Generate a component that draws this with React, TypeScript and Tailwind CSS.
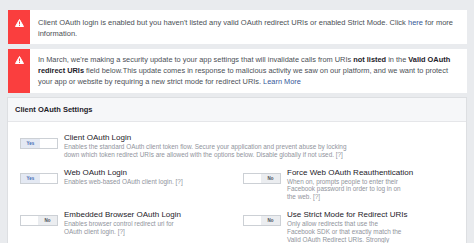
import React from "react";

function Warn() {
  return (
    <svg width="9" height="8" viewBox="0 0 18 16">
      <path d="M9 1 L17 15 H1 Z" fill="#fff" stroke="#fff" strokeWidth="2" strokeLinejoin="round" />
      <rect x="8" y="5" width="2" height="5.5" fill="#fa3e3e" />
      <rect x="8" y="11.8" width="2" height="2" fill="#fa3e3e" />
    </svg>
  );
}

function Toggle({ on }: { on: boolean }) {
  return (
    <div className="flex h-[11px] w-[38px] shrink-0 border border-[#ccd0d5] bg-white text-[4.5px] font-bold leading-[9px]">
      {on ? (
        <>
          <div className="flex w-[19px] items-center justify-center bg-[#e4e9f3] text-[#4267b2]">Yes</div>
          <div className="flex-1 bg-white" />
        </>
      ) : (
        <>
          <div className="flex-1 bg-white" />
          <div className="flex w-[19px] items-center justify-center bg-[#ebedf0] text-[#4b4f56]">No</div>
        </>
      )}
    </div>
  );
}

function Item({ on, title, desc, descW }: { on: boolean; title: string; desc: string; descW: string }) {
  return (
    <div className="flex gap-[6px]">
      <div className="pt-[5px]">
        <Toggle on={on} />
      </div>
      <div>
        <div className="text-[8px] leading-[10px] text-[#1d2129]">{title}</div>
        <div className={`${descW} text-[6.4px] leading-[7.8px] text-[#90949c]`}>{desc}</div>
      </div>
    </div>
  );
}

export default function App() {
  return (
    <div className="h-[243px] overflow-hidden bg-[#e9ebee] pl-[7px] pr-[7px] pt-[10px] font-['Liberation_Sans',Arial,sans-serif]">
      <div className="ml-[1px] flex h-[34px] bg-white">
        <div className="flex w-[22px] shrink-0 justify-center bg-[#fa3e3e] pt-[9px]">
          <Warn />
        </div>
        <div className="pl-[8px] pr-[4px] pt-[7px] text-[7.5px] leading-[11px] text-[#4b4f56]">
          Client OAuth login is enabled but you haven't listed any valid OAuth redirect URIs or enabled Strict Mode. Click{" "}
          <span className="text-[#365899]">here</span> for more information.
        </div>
      </div>
      <div className="ml-[1px] mt-[5px] flex h-[44px] bg-white">
        <div className="flex w-[22px] shrink-0 justify-center bg-[#fa3e3e] pt-[7px]">
          <Warn />
        </div>
        <div className="pl-[8px] pr-[4px] pt-[5px] text-[7.4px] leading-[11px] text-[#4b4f56]">
          In March, we're making a security update to your app settings that will invalidate calls from URIs{" "}
          <b className="text-[#1d2129]">not listed</b> in the <b className="text-[#1d2129]">Valid OAuth redirect URIs</b> field
          below.This update comes in response to malicious activity we saw on our platform, and we want to protect your app or
          website by requiring a new strict mode for redirect URIs. <span className="text-[#365899]">Learn More</span>
        </div>
      </div>
      <div className="mt-[4px] border border-[#dddfe2] bg-white">
        <div className="flex h-[24px] items-center border-b border-[#e5e6e9] bg-[#f6f7f9] pl-[7px] text-[7.5px] font-bold text-[#1d2129]">
          Client OAuth Settings
        </div>
        <div className="flex flex-col gap-[9px] pl-[12px] pt-[11px]">
          <Item
            on
            title="Client OAuth Login"
            descW="w-[298px]"
            desc="Enables the standard OAuth client token flow. Secure your application and prevent abuse by locking down which token redirect URIs are allowed with the options below. Disable globally if not used.  [?]"
          />
          <div className="grid grid-cols-[223px_1fr] gap-y-[9px]">
            <Item on title="Web OAuth Login" descW="w-[124px]" desc="Enables web-based OAuth client login.  [?]" />
            <Item
              on={false}
              title="Force Web OAuth Reauthentication"
              descW="w-[118px]"
              desc="When on, prompts people to enter their Facebook password in order to log in on the web.  [?]"
            />
            <Item
              on={false}
              title="Embedded Browser OAuth Login"
              descW="w-[124px]"
              desc="Enables browser control redirect uri for OAuth client login.  [?]"
            />
            <Item
              on={false}
              title="Use Strict Mode for Redirect URIs"
              descW="w-[118px]"
              desc="Only allow redirects that use the Facebook SDK or that exactly match the Valid OAuth Redirect URIs. Strongly recommended."
            />
          </div>
        </div>
      </div>
    </div>
  );
}
